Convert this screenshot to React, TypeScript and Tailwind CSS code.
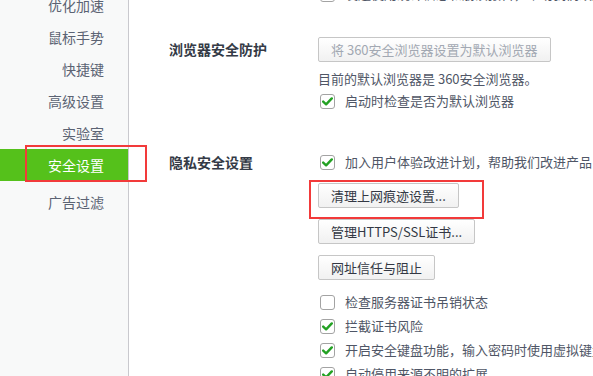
import React from "react";

const font = "font-['Microsoft_YaHei','Noto_Sans_CJK_SC',sans-serif]";

function Checkbox({ checked }: { checked: boolean }) {
  return (
    <span className="ml-[2px] flex h-[15px] w-[15px] shrink-0 items-center justify-center rounded-[3px] border border-[#a3a3a3] bg-white">
      {checked && (
        <svg width="11" height="9" viewBox="0 0 11 9">
          <path d="M1.2 4.6 L4.1 7.3 L9.8 1.4" fill="none" stroke="#23a123" strokeWidth="2.4" strokeLinecap="round" strokeLinejoin="round" />
        </svg>
      )}
    </span>
  );
}

function CheckRow({ checked, label, h = "h-[24px]" }: { checked: boolean; label: string; h?: string }) {
  return (
    <div className={`flex ${h} items-center gap-[10px] whitespace-nowrap`}>
      <Checkbox checked={checked} />
      <span className="text-[13px] text-[#4f5666]">{label}</span>
    </div>
  );
}

function Button({ label, disabled }: { label: string; disabled?: boolean }) {
  return (
    <div
      className={`flex h-[25px] w-fit items-center whitespace-nowrap rounded-[2px] border border-[#c6c6c6] bg-gradient-to-b from-white to-[#f1f1f1] px-[12px] text-[13px] ${
        disabled ? "text-[#a2a8b2]" : "text-[#333844]"
      }`}
    >
      {label}
    </div>
  );
}

const navItems = ["优化加速", "鼠标手势", "快捷键", "高级设置", "实验室"];

export default function App() {
  return (
    <div className={`relative flex h-[376px] w-[593px] overflow-hidden bg-white ${font}`}>
      <aside className="flex w-[129px] shrink-0 flex-col border-r border-[#c9c9ce] bg-[#f8f9f9]">
        <div className="-mt-[11px] flex flex-col">
          {navItems.map((t) => (
            <div key={t} className="h-[32px] pr-[24px] text-right text-[14px] leading-[32px] text-[#5b6373]">
              {t}
            </div>
          ))}
          <div className="h-[32px] bg-[#55c11b] pr-[24px] text-right text-[14px] leading-[32px] text-white">安全设置</div>
          <div className="mt-[5px] h-[32px] pr-[24px] text-right text-[14px] leading-[32px] text-[#5b6373]">广告过滤</div>
        </div>
      </aside>

      <main className="flex flex-1 flex-col pl-[40px]">
        {/* partially visible row at top */}
        <div className="-mt-[18px] grid grid-cols-[149px_1fr]">
          <div />
          <CheckRow checked={false} label="发送使用统计信息和崩溃报告，帮助我们改进产品" />
        </div>

        {/* section 1 */}
        <div className="mt-[31px] grid grid-cols-[149px_1fr]">
          <div className="h-[25px] text-[14px] font-bold leading-[25px] text-[#343a46]">浏览器安全防护</div>
          <div className="flex flex-col">
            <Button label="将 360安全浏览器设置为默认浏览器" disabled />
            <div className="mt-[6px] h-[22px] whitespace-nowrap text-[13px] leading-[22px] text-[#4f5666]">
              目前的默认浏览器是 360安全浏览器。
            </div>
            <CheckRow checked label="启动时检查是否为默认浏览器" h="h-[22px]" />
          </div>
        </div>

        {/* section 2 */}
        <div className="mt-[38px] grid grid-cols-[149px_1fr]">
          <div className="h-[24px] text-[14px] font-bold leading-[24px] text-[#343a46]">隐私安全设置</div>
          <div className="flex flex-col">
            <CheckRow checked label="加入用户体验改进计划，帮助我们改进产品" />
            <div className="mt-[9px] flex flex-col gap-[11px]">
              <Button label="清理上网痕迹设置..." />
              <Button label="管理HTTPS/SSL证书..." />
              <Button label="网址信任与阻止" />
            </div>
            <div className="mt-[10px] flex flex-col">
              <CheckRow checked={false} label="检查服务器证书吊销状态" />
              <CheckRow checked label="拦截证书风险" />
              <CheckRow checked label="开启安全键盘功能，输入密码时使用虚拟键盘" />
              <CheckRow checked label="自动停用来源不明的扩展" />
            </div>
          </div>
        </div>
      </main>

      {/* annotation boxes */}
      <div className="pointer-events-none absolute left-[25px] top-[145px] h-[37px] w-[122px] border-2 border-[#f23a3a]" />
      <div className="pointer-events-none absolute left-[309px] top-[180px] h-[39px] w-[175px] border-2 border-[#f23a3a]" />
    </div>
  );
}
